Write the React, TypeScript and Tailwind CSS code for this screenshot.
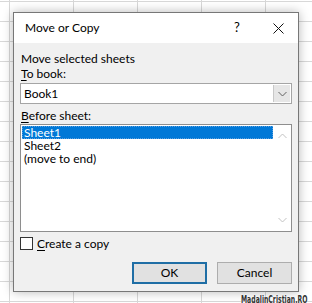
import React from "react";

const font = { fontFamily: "'Segoe UI', Lato, 'Noto Sans', sans-serif" };

function Chevron({ up = false, className = "" }: { up?: boolean; className?: string }) {
  return (
    <svg width="9" height="6" viewBox="0 0 9 6" className={className}>
      <path
        d={up ? "M0.5 5 L4.5 1 L8.5 5" : "M0.5 1 L4.5 5 L8.5 1"}
        fill="none"
        stroke="currentColor"
        strokeWidth="1"
      />
    </svg>
  );
}

function TitleBar() {
  return (
    <div className="flex h-[30px] items-center bg-white pl-[11px] text-[12px] text-black">
      <span className="flex-1">Move or Copy</span>
      <span className="w-[30px] text-center text-[13px]">?</span>
      <span className="flex w-[46px] justify-center pl-[6px]">
        <svg width="11" height="11" viewBox="0 0 11 11">
          <path d="M0.5 0.5 L10.5 10.5 M10.5 0.5 L0.5 10.5" stroke="#111" strokeWidth="1" />
        </svg>
      </span>
    </div>
  );
}

function BookSelect() {
  return (
    <div className="flex h-[21px] border border-[#a5a5a5] bg-white">
      <div className="flex flex-1 items-center pl-[3px] text-[12px]">Book1</div>
      <div className="m-px flex w-[17px] items-center justify-center border-l border-[#c8c8c8] bg-[#e6e6e6] text-[#606060]">
        <Chevron />
      </div>
    </div>
  );
}

function SheetList() {
  const rows = ["Sheet1", "Sheet2", "(move to end)"];
  return (
    <div className="flex h-[108px] border border-[#8e8e8e] bg-white">
      <div className="flex-1 pl-px pt-px">
        {rows.map((r, i) => (
          <div
            key={r}
            className={
              i === 0
                ? "flex h-[13px] items-center bg-[#0078d7] pl-[2px] text-[12px] leading-[12px] text-white outline outline-1 outline-dotted outline-[#5aa0e0] -outline-offset-1"
                : "flex h-[13px] items-center pl-[2px] text-[12px] leading-[12px] text-black"
            }
          >
            {r}
          </div>
        ))}
      </div>
      <div className="flex w-[18px] flex-col items-center justify-between py-[8px] text-[#c2c2c2]">
        <Chevron up />
        <Chevron />
      </div>
    </div>
  );
}

export default function App() {
  return (
    <div
      className="relative h-[303px] w-[312px] overflow-hidden bg-white bg-[linear-gradient(to_right,#d8d8d8_1px,transparent_1px),linear-gradient(to_bottom,#d8d8d8_1px,transparent_1px)] bg-[size:64px_20px] bg-[position:9px_1px] pl-[13px] pt-[12px]"
      style={font}
    >
      <div className="flex h-[280px] w-[286px] flex-col border border-[#777] bg-[#f0f0f0] shadow-[0_0_10px_rgba(0,0,0,0.28)]">
        <TitleBar />
        <div className="flex flex-1 flex-col px-[6px] pt-[8px] text-[12px] text-black">
          <div className="h-[15px] pl-px leading-[15px]">Move selected sheets</div>
          <div className="h-[15px] pl-px leading-[15px]">
            <span className="underline underline-offset-2">T</span>o book:
          </div>
          <div className="mt-[2px]">
            <BookSelect />
          </div>
          <div className="mt-[4px] h-[15px] pl-px leading-[15px]">
            <span className="underline underline-offset-2">B</span>efore sheet:
          </div>
          <div className="mt-px">
            <SheetList />
          </div>
          <div className="mt-[5px] flex h-[13px] items-center">
            <div className="h-[13px] w-[13px] border border-[#333] bg-white" />
            <span className="pl-[4px] leading-[13px]">
              <span className="underline underline-offset-2">C</span>reate a copy
            </span>
          </div>
          <div className="mt-[12px] flex justify-end gap-[10px]">
            <button className="h-[22px] w-[75px] border-2 border-[#1f6ea5] bg-[#e1e1e1] text-[12px]">
              OK
            </button>
            <button className="h-[22px] w-[75px] border border-[#adadad] bg-[#e1e1e1] text-[12px]">
              Cancel
            </button>
          </div>
        </div>
      </div>
      <div className="absolute left-[241px] top-[285px] w-[68px]">
        <span
          className="inline-block origin-left scale-x-[0.62] whitespace-nowrap text-[11px] font-bold leading-[12px] text-[#333] [text-shadow:0_0_2px_#fff,0_0_2px_#fff]"
          style={{ fontFamily: "'DejaVu Sans Condensed', 'Liberation Sans', sans-serif" }}
        >
          MadalinCristian.RO
        </span>
      </div>
    </div>
  );
}
